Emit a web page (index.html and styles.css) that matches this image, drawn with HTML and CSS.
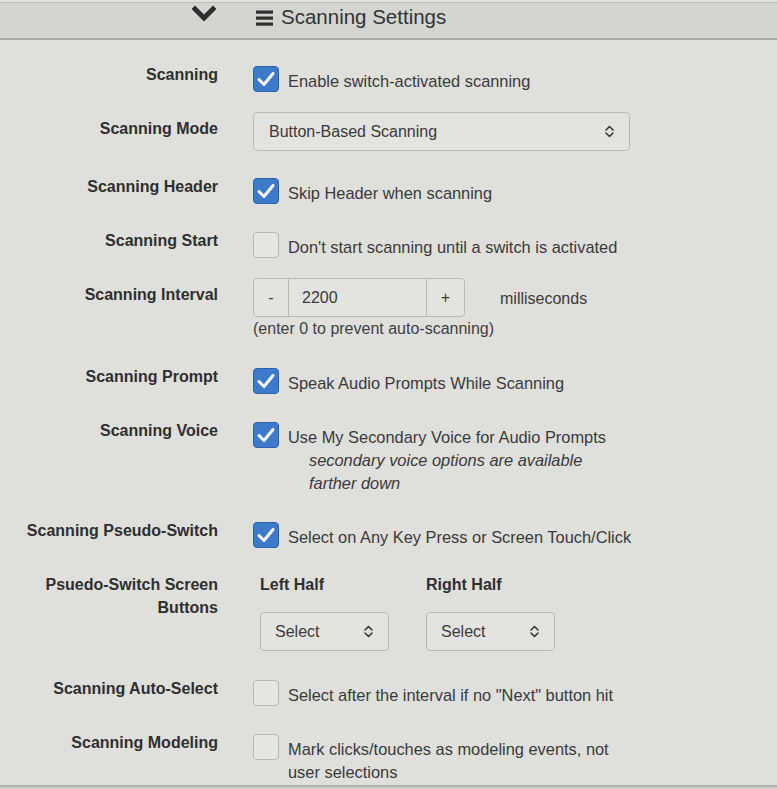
FILE: index.html
```html
<!DOCTYPE html>
<html lang="en">
<head>
<meta charset="utf-8">
<title>Scanning Settings</title>
<link rel="stylesheet" href="styles.css">
</head>
<body>
<header class="topbar">
  <div class="topbar-left">
    <svg class="chevron" width="24" height="18" viewBox="0 0 24 18" aria-hidden="true">
      <polyline points="3,4 12,13 21,4" fill="none" stroke="#2f2f2f" stroke-width="5" stroke-linecap="square"/>
    </svg>
  </div>
  <h1 class="title">
    <svg class="burger" width="17" height="17" viewBox="0 0 17 17" aria-hidden="true">
      <rect x="0" y="1.5" width="17" height="3.2" fill="#2f2f2f"/>
      <rect x="0" y="7.5" width="17" height="3.2" fill="#2f2f2f"/>
      <rect x="0" y="13.5" width="17" height="3.2" fill="#2f2f2f"/>
    </svg>
    <span>Scanning Settings</span>
  </h1>
</header>

<main class="settings">
  <div class="row">
    <div class="row-label">Scanning</div>
    <div class="check">
      <span class="box checked"><svg viewBox="0 0 26 26"><path d="M6 13.5 L11 18.5 L20 7.5"/></svg></span>
      <span class="check-text">Enable switch-activated scanning</span>
    </div>
  </div>

  <div class="row">
    <div class="row-label">Scanning Mode</div>
    <div class="select select-wide">
      <span>Button-Based Scanning</span>
      <svg class="updown" viewBox="0 0 9 13"><path d="M1 5 L4.5 1.5 L8 5 M1 8 L4.5 11.5 L8 8"/></svg>
    </div>
  </div>

  <div class="row">
    <div class="row-label">Scanning Header</div>
    <div class="check">
      <span class="box checked"><svg viewBox="0 0 26 26"><path d="M6 13.5 L11 18.5 L20 7.5"/></svg></span>
      <span class="check-text">Skip Header when scanning</span>
    </div>
  </div>

  <div class="row">
    <div class="row-label">Scanning Start</div>
    <div class="check">
      <span class="box"></span>
      <span class="check-text">Don't start scanning until a switch is activated</span>
    </div>
  </div>

  <div class="row">
    <div class="row-label">Scanning Interval</div>
    <div class="interval">
      <div class="interval-line">
        <div class="stepper">
          <span class="step step-minus">-</span>
          <span class="step-value">2200</span>
          <span class="step step-plus">+</span>
        </div>
        <span class="unit">milliseconds</span>
      </div>
      <div class="help">(enter 0 to prevent auto-scanning)</div>
    </div>
  </div>

  <div class="row">
    <div class="row-label">Scanning Prompt</div>
    <div class="check">
      <span class="box checked"><svg viewBox="0 0 26 26"><path d="M6 13.5 L11 18.5 L20 7.5"/></svg></span>
      <span class="check-text">Speak Audio Prompts While Scanning</span>
    </div>
  </div>

  <div class="row">
    <div class="row-label">Scanning Voice</div>
    <div class="check">
      <span class="box checked"><svg viewBox="0 0 26 26"><path d="M6 13.5 L11 18.5 L20 7.5"/></svg></span>
      <div class="check-text">
        Use My Secondary Voice for Audio Prompts
        <div class="note">secondary voice options are available farther down</div>
      </div>
    </div>
  </div>

  <div class="row">
    <div class="row-label">Scanning Pseudo-Switch</div>
    <div class="check">
      <span class="box checked"><svg viewBox="0 0 26 26"><path d="M6 13.5 L11 18.5 L20 7.5"/></svg></span>
      <span class="check-text">Select on Any Key Press or Screen Touch/Click</span>
    </div>
  </div>

  <div class="row">
    <div class="row-label tall">Psuedo-Switch Screen Buttons</div>
    <div class="halves">
      <div class="half">
        <div class="half-label">Left Half</div>
        <div class="select select-small">
          <span>Select</span>
          <svg class="updown" viewBox="0 0 9 13"><path d="M1 5 L4.5 1.5 L8 5 M1 8 L4.5 11.5 L8 8"/></svg>
        </div>
      </div>
      <div class="half">
        <div class="half-label">Right Half</div>
        <div class="select select-small">
          <span>Select</span>
          <svg class="updown" viewBox="0 0 9 13"><path d="M1 5 L4.5 1.5 L8 5 M1 8 L4.5 11.5 L8 8"/></svg>
        </div>
      </div>
    </div>
  </div>

  <div class="row">
    <div class="row-label">Scanning Auto-Select</div>
    <div class="check">
      <span class="box"></span>
      <span class="check-text">Select after the interval if no "Next" button hit</span>
    </div>
  </div>

  <div class="row">
    <div class="row-label">Scanning Modeling</div>
    <div class="check">
      <span class="box"></span>
      <span class="check-text narrow">Mark clicks/touches as modeling events, not user selections</span>
    </div>
  </div>
</main>
</body>
</html>
```

FILE: styles.css
```css
html {
  background: #cdcdca;
}

body {
  margin: 0;
  background: #dfdfdc;
  font-family: "Liberation Sans", Arial, sans-serif;
  font-size: 16px;
  color: #363636;
}

/* top bar */
.topbar {
  display: grid;
  grid-template-columns: 218px 1fr;
  column-gap: 38px;
  height: 35px;
  margin-top: 2px;
  border-top: 1px solid #bcbcb9;
  border-bottom: 2px solid #a9a9a6;
  background: #d4d4d1;
}

.topbar-left {
  display: flex;
  justify-content: flex-end;
  padding-top: 2px;
  padding-right: 2px;
}

.chevron {
  display: block;
}

.title {
  margin: 0;
  display: flex;
  align-items: center;
  gap: 8px;
  height: 24px;
  margin-top: 2px;
  font-size: 20.5px;
  font-weight: 400;
  color: #333;
}

.burger {
  display: block;
  margin-top: 1px;
}

/* settings form */
.settings {
  display: flex;
  flex-direction: column;
  gap: 19px;
  padding-top: 18px;
  padding-bottom: 1px;
  border-bottom: 2px solid #b3b3b0;
}

.row {
  display: grid;
  grid-template-columns: 218px 1fr;
  column-gap: 35px;
  align-items: start;
}

.row-label {
  text-align: right;
  font-weight: 700;
  line-height: 20px;
  padding-top: 7px;
  color: #2f2f2f;
}

.row-label.tall {
  line-height: 23px;
  padding-top: 5px;
}

/* checkboxes */
.check {
  display: flex;
  align-items: flex-start;
  gap: 9px;
}

.box {
  flex: none;
  width: 26px;
  height: 26px;
  box-sizing: border-box;
  margin-top: 8px;
  border: 1px solid #b6b6b3;
  border-radius: 4px;
  background: #e6e6e3;
}

.box.checked {
  background: #3d7acb;
  border-color: #2d62a9;
}

.box svg {
  display: block;
  margin: -1px;
  width: 26px;
  height: 26px;
}

.box svg path {
  fill: none;
  stroke: #fff;
  stroke-width: 3;
  stroke-linecap: round;
  stroke-linejoin: round;
}

.check-text {
  padding-top: 12px;
  line-height: 23px;
  font-size: 16.4px;
  color: #3a3a3a;
}

.check-text.narrow {
  max-width: 345px;
}

.note {
  padding-left: 21px;
  max-width: 290px;
  font-style: italic;
}

/* selects */
.select {
  display: flex;
  align-items: center;
  justify-content: space-between;
  box-sizing: border-box;
  height: 39px;
  border: 1px solid #b9b9b6;
  border-radius: 4px;
  background: #e3e3e0;
  color: #3a3a3a;
}

.select-wide {
  width: 377px;
  padding: 0 15px;
}

.select-small {
  width: 129px;
  margin-top: 17px;
  padding: 0 15px 0 14px;
}

.updown {
  width: 9px;
  height: 13px;
  display: block;
}

.updown path {
  fill: none;
  stroke: #3a3a3a;
  stroke-width: 1.6;
  stroke-linecap: round;
  stroke-linejoin: round;
}

/* interval stepper */
.interval-line {
  display: flex;
  align-items: center;
  gap: 35px;
}

.stepper {
  display: flex;
  box-sizing: border-box;
  width: 212px;
  height: 39px;
  border: 1px solid #b9b9b6;
  border-radius: 4px;
  background: #e3e3e0;
  color: #3a3a3a;
}

.step {
  display: flex;
  align-items: center;
  justify-content: center;
  flex: none;
}

.step-minus {
  width: 34px;
  border-right: 1px solid #b9b9b6;
}

.step-plus {
  width: 37px;
  border-left: 1px solid #b9b9b6;
}

.step-value {
  flex: 1;
  display: flex;
  align-items: center;
  padding-left: 13px;
}

.unit {
  padding-top: 3px;
  color: #3a3a3a;
}

.help {
  line-height: 24px;
  color: #404040;
}

/* screen halves */
.halves {
  display: grid;
  grid-template-columns: 166px 129px;
  padding-left: 7px;
  padding-bottom: 2px;
}

.half-label {
  font-weight: 700;
  line-height: 20px;
  padding-top: 7px;
  color: #2f2f2f;
}
```
